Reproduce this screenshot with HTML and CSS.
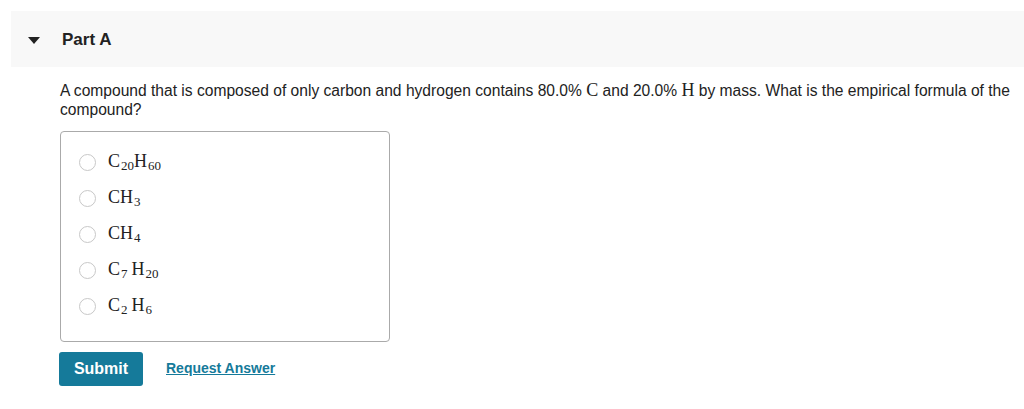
FILE: index.html
```html
<!DOCTYPE html>
<html lang="en">
<head>
    <meta charset="UTF-8">
    <title>Part A</title>
    <link rel="stylesheet" href="styles.css">
</head>
<body>
    <div class="part-header">
        <span class="caret"></span>
        <h2>Part A</h2>
    </div>
    <div class="part-body">
        <p class="question">A compound that is composed of only carbon and hydrogen contains 80.0% <span class="m">C</span> and 20.0% <span class="m">H</span> by mass. What is the empirical formula of the compound?</p>
        <div class="choices">
            <label class="choice"><span class="radio"></span><span class="f">C<sub>20</sub>H<sub>60</sub></span></label>
            <label class="choice"><span class="radio"></span><span class="f">CH<sub>3</sub></span></label>
            <label class="choice"><span class="radio"></span><span class="f">CH<sub>4</sub></span></label>
            <label class="choice"><span class="radio"></span><span class="f">C<sub class="gap">7</sub>H<sub>20</sub></span></label>
            <label class="choice"><span class="radio"></span><span class="f">C<sub class="gap">2</sub>H<sub>6</sub></span></label>
        </div>
        <div class="actions">
            <button class="submit">Submit</button>
            <a href="#" class="request">Request Answer</a>
        </div>
    </div>
</body>
</html>
```

FILE: styles.css
```css
body {
    font-family: 'Liberation Sans', Arial, sans-serif;
    color: #222;
    margin: 0;
    padding: 11px 0 0 11px;
    background: #fff;
}

.part-header {
    display: flex;
    align-items: center;
    height: 56px;
    background: #f8f8f8;
}

.caret {
    width: 0;
    height: 0;
    margin: 2px 0 0 17px;
    border-left: 6px solid transparent;
    border-right: 6px solid transparent;
    border-top: 7px solid #222;
}

.part-header h2 {
    margin: 1px 0 0 22px;
    font-size: 17px;
    font-weight: bold;
    color: #222;
}

.part-body {
    padding-left: 49px;
}

.question {
    margin: 14px 0 0;
    font-size: 15.6px;
    line-height: 19px;
    color: #222;
}

.m {
    font-family: 'Liberation Serif', 'Times New Roman', serif;
    font-size: 18px;
    line-height: 1;
}

.choices {
    width: 330px;
    height: 211px;
    margin-top: 12px;
    border: 1px solid #aaa;
    border-radius: 4px;
    box-sizing: border-box;
    padding: 22px 0 0 18px;
    display: flex;
    flex-direction: column;
    gap: 20px;
}

.choice {
    display: flex;
    align-items: center;
    height: 16px;
}

.radio {
    width: 15px;
    height: 15px;
    border: 1px solid #c8c8c8;
    border-radius: 50%;
    background: #fff;
}

.f {
    margin-left: 12px;
    font-family: 'Liberation Serif', 'Times New Roman', serif;
    font-size: 18px;
    color: #222;
}

.f sub {
    font-size: 13px;
    vertical-align: -3px;
    margin-left: 1px;
}

.f sub.gap {
    margin-right: 4px;
}

.actions {
    display: flex;
    align-items: center;
    margin-top: 10px;
    margin-left: -1px;
}

.submit {
    width: 84px;
    height: 34px;
    background: #157a9a;
    color: #fff;
    border: none;
    border-radius: 3px;
    font-family: 'Liberation Sans', Arial, sans-serif;
    font-size: 16px;
    font-weight: bold;
}

.request {
    margin-left: 23px;
    margin-top: -2px;
    color: #157a9a;
    font-size: 14px;
    font-weight: bold;
}
```
